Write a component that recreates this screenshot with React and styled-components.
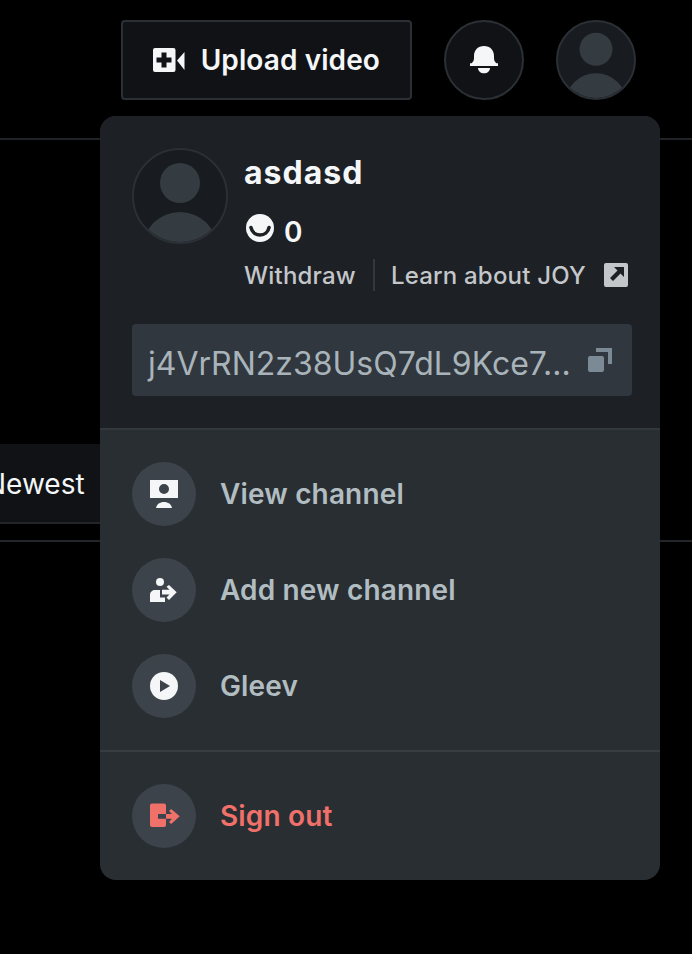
import React from 'react'
import styled, { createGlobalStyle } from 'styled-components'

const GlobalStyle = createGlobalStyle`
  html, body {
    margin: 0;
    background: #000;
    overflow: hidden;
  }
  * {
    box-sizing: border-box;
  }
`

const Page = styled.div`
  position: relative;
  height: 954px;
  font-family: Inter, "Liberation Sans", sans-serif;
  background: #000;
  overflow: hidden;
`

const TopBar = styled.header`
  display: flex;
  justify-content: flex-end;
  gap: 32px;
  height: 140px;
  padding: 20px 56px 0 0;
  border-bottom: 2px solid #1f2327;
`

const UploadButton = styled.button`
  display: flex;
  align-items: center;
  gap: 16px;
  height: 80px;
  padding: 0 30px;
  background: #101215;
  border: 2px solid #2b3036;
  border-radius: 4px;
  color: #f4f6f8;
  font-family: inherit;
  font-size: 28px;
  font-weight: 600;
  letter-spacing: 0.1px;
`

const RoundButton = styled.div`
  display: flex;
  align-items: center;
  justify-content: center;
  width: 80px;
  height: 80px;
  background: #101215;
  border: 2px solid #2b3036;
  border-radius: 50%;
`

const AvatarCircle = styled.div`
  flex: none;
  width: ${(p) => p.$size}px;
  height: ${(p) => p.$size}px;
  border-radius: 50%;
  overflow: hidden;
  background: #181b1f;
  border: 2px solid #2b3036;

  svg {
    display: block;
    width: 100%;
    height: 100%;
  }
`

const Content = styled.main`
  padding-top: 304px;
`

const SortBox = styled.div`
  display: flex;
  align-items: center;
  width: 160px;
  height: 80px;
  margin-left: -40px;
  padding: 2px 0 0 25px;
  background: #101215;
  border-bottom: 2px solid #22262b;
  color: #f4f6f8;
  font-size: 28px;
`

const Rule = styled.div`
  height: 2px;
  margin-top: 16px;
  background: #22262b;
`

const Menu = styled.div`
  position: absolute;
  top: 116px;
  left: 100px;
  width: 560px;
  height: 764px;
  background: #292e32;
  border-radius: 16px;
  overflow: hidden;
`

const AccountSection = styled.section`
  height: 314px;
  padding: 32px 28px 32px 32px;
  background: #1d2025;
  border-bottom: 2px solid #33383f;
`

const AccountRow = styled.div`
  display: flex;
  gap: 16px;
`

const AccountInfo = styled.div`
  display: flex;
  flex-direction: column;
  align-items: flex-start;
`

const Name = styled.div`
  height: 50px;
  color: #f4f6f8;
  font-size: 32px;
  font-weight: 700;
  line-height: 50px;
  letter-spacing: 1px;
`

const Balance = styled.div`
  display: flex;
  align-items: center;
  gap: 10px;
  height: 48px;
  margin-top: 10px;
  padding-left: 2px;
  color: #f4f6f8;
  font-size: 28px;
  font-weight: 600;

  svg {
    margin-top: -8px;
  }
`

const LinkRow = styled.div`
  display: flex;
  align-items: center;
  height: 32px;
  margin-top: 3px;
  color: #c4c7ca;
  font-size: 24px;
  font-weight: 500;
  letter-spacing: 0.2px;
`

const Divider = styled.span`
  width: 2px;
  height: 32px;
  margin: 0 16px 0 17px;
  background: #33383f;
`

const ExternalIcon = styled.svg`
  width: 24px;
  height: 24px;
  margin-left: 18px;
`

const AddressBox = styled.div`
  display: flex;
  align-items: center;
  justify-content: space-between;
  width: 500px;
  height: 72px;
  margin-top: 33px;
  padding: 0 20px 0 16px;
  background: #31373e;
  border-radius: 4px;
  color: #a8b4ba;
  font-size: 32px;
  white-space: nowrap;
`

const AddressText = styled.span`
  margin-top: 7px;
`

const MenuList = styled.div`
  padding: 16px 0;
  border-bottom: ${(p) => (p.$ruled ? '2px solid #383d44' : 'none')};
`

const MenuItem = styled.div`
  display: flex;
  align-items: center;
  gap: 24px;
  height: 96px;
  padding: 0 32px;
  color: ${(p) => (p.$danger ? '#f0706a' : '#b1bdc1')};
  font-size: 28px;
  font-weight: 600;
  letter-spacing: 0.15px;
`

const IconCircle = styled.span`
  display: flex;
  align-items: center;
  justify-content: center;
  width: 64px;
  height: 64px;
  border-radius: 50%;
  background: #3d434b;
`

const Avatar = ({ size }) => (
  <AvatarCircle $size={size}>
    <svg viewBox="0 0 92 92">
      <circle cx="46" cy="33" r="20" fill="#343b41" />
      <ellipse cx="46" cy="98" rx="37" ry="36" fill="#343b41" />
    </svg>
  </AvatarCircle>
)

const UploadIcon = () => (
  <svg width="32" height="24" viewBox="0 0 32 24">
    <rect width="22.500" height="24" rx="2" fill="#f4f6f8" />
    <path d="M24 12.500 31.500 4v18z" fill="#f4f6f8" />
    <path d="M8.500 4.500h5v5h5v5h-5v5h-5v-5h-5v-5h5z" fill="#101215" />
  </svg>
)

const BellIcon = () => (
  <svg width="28" height="28" viewBox="0 0 28 28">
    <path
      d="M14 0c-6 0-10 4-10 10v2c0 2.600-1 4-2.500 5.300H0V20h28v-2.700h-1.500C25 16 24 14.600 24 12v-2c0-6-4-10-10-10z"
      fill="#f4f6f8"
    />
    <path d="M8 22h12c0 3-2.600 5.300-6 5.300S8 25 8 22z" fill="#f4f6f8" />
  </svg>
)

const JoyIcon = () => (
  <svg width="28" height="28" viewBox="0 0 28 28">
    <circle cx="14" cy="14" r="14" fill="#f4f6f8" />
    <path
      d="M5 13.500c.8 4.500 4.500 7.500 9 7.500s8.200-3 9-7.500"
      fill="none"
      stroke="#1d2025"
      strokeWidth="3.600"
      strokeLinecap="round"
    />
  </svg>
)

const ViewIcon = () => (
  <svg width="32" height="32" viewBox="0 0 32 32">
    <path fillRule="evenodd" d="M2 2h28v18H2zM16 6a5 5 0 1 0 0 10 5 5 0 0 0 0-10z" fill="#f4f6f8" />
    <path d="M8 30c.6-3.800 3.900-6 8-6s7.400 2.200 8 6z" fill="#f4f6f8" />
  </svg>
)

const AddChannelIcon = () => (
  <svg width="32" height="32" viewBox="0 0 32 32">
    <circle cx="12" cy="8" r="4" fill="#f4f6f8" />
    <path d="M2 28v-7c0-3 2.400-5 5-5h5v7.500h5V28z" fill="#f4f6f8" />
    <path d="M21 11l7.700 7.300-7.700 7.700-2.500-2.500 3-3H14v-4.700h7.500l-3-3z" fill="#f4f6f8" />
  </svg>
)

const PlayIcon = () => (
  <svg width="32" height="32" viewBox="0 0 32 32">
    <circle cx="16" cy="16" r="14" fill="#f4f6f8" />
    <path d="M12 10l10 6-10 6z" fill="#3d434b" />
  </svg>
)

const SignOutIcon = () => (
  <svg width="32" height="32" viewBox="0 0 32 32">
    <rect x="2" y="3.500" width="16" height="23.500" rx="2" fill="#f0706a" />
    <path d="M10 14h8v4.700h-8z" fill="#3d434b" />
    <path d="M18 14h6l-3-3 2.200-2 8.500 7.300-8.500 7.700-2.200-2 3-3.300h-6z" fill="#f0706a" />
  </svg>
)

const CopyIcon = () => (
  <svg width="24" height="24" viewBox="0 0 24 24">
    <rect y="8" width="16" height="16" rx="2" fill="#7b8a95" />
    <path d="M8 0h16v16h-4V4H8z" fill="#7b8a95" />
  </svg>
)

export default function App() {
  return (
    <Page>
      <GlobalStyle />
      <TopBar>
        <UploadButton>
          <UploadIcon />
          Upload video
        </UploadButton>
        <RoundButton>
          <BellIcon />
        </RoundButton>
        <Avatar size={80} />
      </TopBar>
      <Content>
        <SortBox>Newest</SortBox>
        <Rule />
      </Content>
      <Menu>
        <AccountSection>
          <AccountRow>
            <Avatar size={96} />
            <AccountInfo>
              <Name>asdasd</Name>
              <Balance>
                <JoyIcon />0
              </Balance>
              <LinkRow>
                Withdraw
                <Divider />
                Learn about JOY
                <ExternalIcon viewBox="0 0 24 24">
                  <rect width="24" height="24" rx="2" fill="#c4c7ca" />
                  <path d="M10 4h10v10l-3.500-3.500L9 18l-3-3 7.500-7.500z" fill="#1d2025" />
                </ExternalIcon>
              </LinkRow>
            </AccountInfo>
          </AccountRow>
          <AddressBox>
            <AddressText>j4VrRN2z38UsQ7dL9Kce7...</AddressText>
            <CopyIcon />
          </AddressBox>
        </AccountSection>
        <MenuList $ruled>
          <MenuItem>
            <IconCircle><ViewIcon /></IconCircle>
            View channel
          </MenuItem>
          <MenuItem>
            <IconCircle><AddChannelIcon /></IconCircle>
            Add new channel
          </MenuItem>
          <MenuItem>
            <IconCircle><PlayIcon /></IconCircle>
            Gleev
          </MenuItem>
        </MenuList>
        <MenuList>
          <MenuItem $danger>
            <IconCircle><SignOutIcon /></IconCircle>
            Sign out
          </MenuItem>
        </MenuList>
      </Menu>
    </Page>
  )
}
